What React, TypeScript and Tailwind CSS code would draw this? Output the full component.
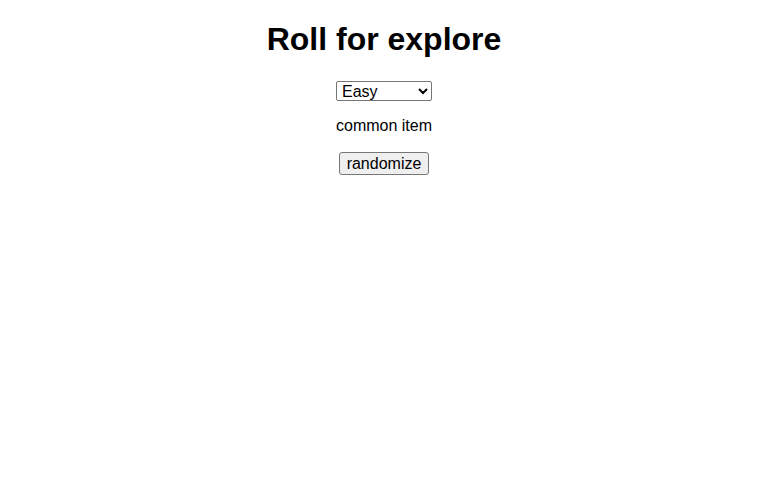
import React, { useState } from "react";

const items: Record<string, string[]> = {
  Easy: ["common item", "uncommon item"],
  Medium: ["uncommon item", "rare item"],
  Hard: ["rare item", "legendary item"],
};

export default function App() {
  const [level, setLevel] = useState("Easy");
  const [result, setResult] = useState("common item");

  const roll = () => {
    const pool = items[level];
    setResult(pool[Math.floor(Math.random() * pool.length)]);
  };

  return (
    <div className="flex flex-col items-center bg-white text-black min-h-[480px] font-['Liberation_Sans',Arial,sans-serif] text-base">
      <h1 className="mt-[21px] mb-[23px] text-[32px] leading-[37px] font-bold">Roll for explore</h1>
      <select
        value={level}
        onChange={(e) => setLevel(e.target.value)}
        className="w-[96px] h-[20px] border border-[#767676] rounded-[2px] bg-white text-base leading-[18px] pl-[1px]"
      >
        <option>Easy</option>
        <option>Medium</option>
        <option>Hard</option>
      </select>
      <p className="mt-4 mb-[17px] leading-[18px]">{result}</p>
      <button
        onClick={roll}
        className="h-[23px] w-[90px] border border-[#767676] rounded-[3px] bg-[#efefef] text-base leading-[18px] px-[6px]"
      >
        randomize
      </button>
    </div>
  );
}
